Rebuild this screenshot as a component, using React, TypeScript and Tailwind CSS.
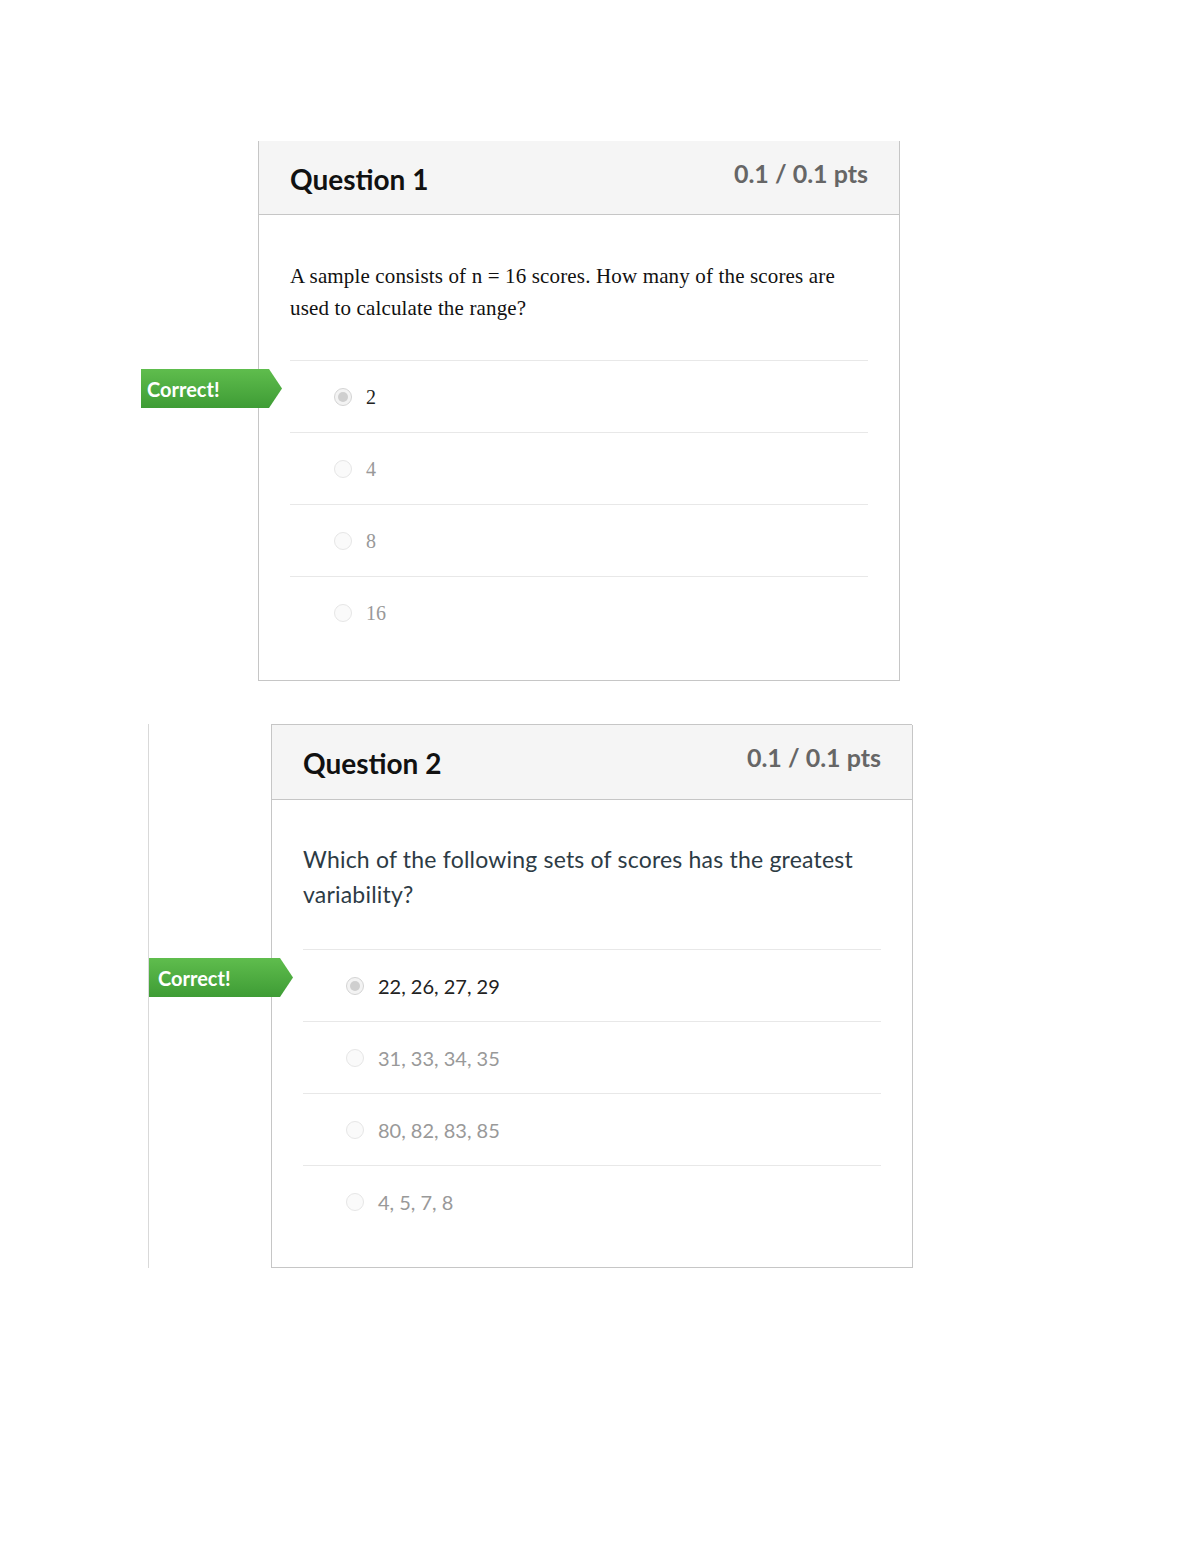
import React from 'react';

type Answer = { text: string; selected?: boolean };

interface QuestionProps {
  title: string;
  points: string;
  prompt: string;
  answers: Answer[];
  serif?: boolean;
  badgeClass: string;
}

// Canvas-style "Correct!" flag that sticks out to the left of the answer
const CorrectFlag = ({ className }: { className: string }) => (
  <div
    className={`absolute top-[8px] h-[39px] flex items-center text-white font-bold text-[20px] bg-gradient-to-b from-[#5fbd4d] to-[#3e9c35] [clip-path:polygon(0_0,calc(100%-13px)_0,100%_50%,calc(100%-13px)_100%,0_100%)] ${className}`}
    style={{ fontFamily: 'Lato, "Open Sans", sans-serif' }}
  >
    Correct!
  </div>
);

const Radio = ({ selected }: { selected?: boolean }) => (
  <span
    className={`shrink-0 w-[18px] h-[18px] rounded-full border flex items-center justify-center ${
      selected ? 'border-[#d4d4d4] bg-[#f3f3f3]' : 'border-[#e6e6e6] bg-[#fafafa]'
    }`}
  >
    {selected && <span className="w-[10px] h-[10px] rounded-full bg-[#cfcfcf]" />}
  </span>
);

const Question = ({ title, points, prompt, answers, serif, badgeClass }: QuestionProps) => {
  const bodyFont = serif ? '"Liberation Serif", "Times New Roman", serif' : 'Lato, "Open Sans", sans-serif';
  return (
    <div className="w-[642px] border-x border-b border-[#c6c6c6] bg-white">
      <div
        className={`${serif ? 'h-[74px]' : 'h-[75px]'} bg-[#f5f5f5] border-b border-[#c6c6c6] flex justify-between px-[31px]`}
        style={{ fontFamily: 'Lato, "Open Sans", sans-serif' }}
      >
        <h2 className="pt-[20px] text-[28px] font-bold text-[#111] leading-[36px]">{title}</h2>
        <span className="pt-[16px] text-[25px] font-bold text-[#666] leading-[32px]">{points}</span>
      </div>
      <div className={`px-[31px] ${serif ? 'pt-[45px] pb-[32px]' : 'pt-[42px] pb-[30px]'}`}>
        <p
          className={
            serif
              ? 'text-[21px] leading-[32px] text-[#111] tracking-[0.15px]'
              : 'text-[23px] leading-[35px] text-[#2d3b45] tracking-[0.2px]'
          }
          style={{ fontFamily: bodyFont }}
        >
          {prompt}
        </p>
        <div className={serif ? 'mt-[36px]' : 'mt-[37px]'}>
          {answers.map((a, i) => (
            <div
              key={i}
              className={`relative h-[72px] border-t border-[#e8e8e8] flex items-center ${
                serif ? 'pl-[44px] gap-[14px]' : 'pl-[43px] gap-[14px]'
              }`}
            >
              {a.selected && <CorrectFlag className={badgeClass} />}
              <Radio selected={a.selected} />
              <span
                className={`text-[20px] ${a.selected ? 'text-[#222]' : 'text-[#999]'}`}
                style={{ fontFamily: bodyFont }}
              >
                {a.text}
              </span>
            </div>
          ))}
        </div>
      </div>
    </div>
  );
};

export default function App() {
  return (
    <div className="w-[1200px] min-h-[1553px] bg-white pt-[141px]">
      <div className="ml-[258px]">
        <Question
          title="Question 1"
          points="0.1 / 0.1 pts"
          serif
          badgeClass="left-[-149px] w-[141px] pl-[6px]"
          prompt="A sample consists of n = 16 scores. How many of the scores are used to calculate the range?"
          answers={[{ text: '2', selected: true }, { text: '4' }, { text: '8' }, { text: '16' }]}
        />
      </div>

      <div className="mt-[43px] ml-[148px] border-l border-[#d9d9d9] pl-[122px]">
        <div className="border-t border-[#c6c6c6] w-[641px]">
          <Question
            title="Question 2"
            points="0.1 / 0.1 pts"
            badgeClass="left-[-154px] w-[144px] pl-[9px]"
            prompt="Which of the following sets of scores has the greatest variability?"
            answers={[
              { text: '22, 26, 27, 29', selected: true },
              { text: '31, 33, 34, 35' },
              { text: '80, 82, 83, 85' },
              { text: '4, 5, 7, 8' },
            ]}
          />
        </div>
      </div>
    </div>
  );
}
